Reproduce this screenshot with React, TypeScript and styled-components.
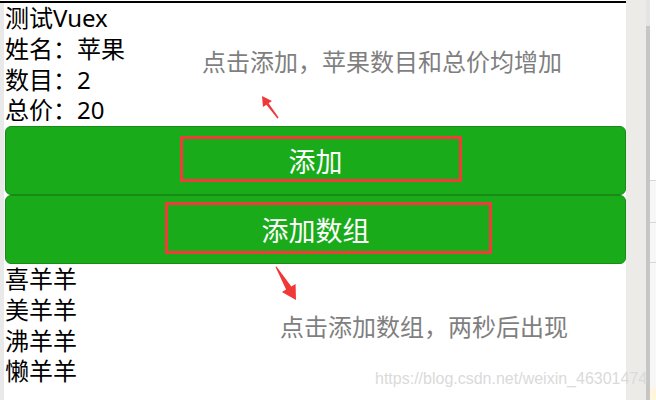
import React from 'react'
import styled, { createGlobalStyle } from 'styled-components'

const GlobalStyle = createGlobalStyle`
  html, body {
    margin: 0;
    padding: 0;
    background: #ffffff;
    overflow: hidden;
  }
`

const Frame = styled('div')`
  position: relative;
  display: flex;
  width: 656px;
  height: 400px;
  overflow: hidden;
  font-family: "Noto Sans", "Noto Sans CJK SC", sans-serif;
`

const Page = styled('div')`
  display: flex;
  flex-direction: column;
  width: 626px;
  flex-shrink: 0;
`

const TopRule = styled('div')`
  height: 3px;
  border-top: 1px solid #ffffff;
  border-bottom: 2px solid #000000;
  box-sizing: border-box;
  flex-shrink: 0;
`

const Content = styled('div')`
  flex: 1;
  border-left: 4px solid #e9e9e9;
  padding: 0 0 0 1px;
`

const Line = styled('div')`
  font-size: 24px;
  line-height: 30.75px;
  color: #000000;
  white-space: nowrap;
`

const Block = styled('div')`
  display: flex;
  flex-direction: column;
`

const GreenButton = styled('button')`
  display: flex;
  align-items: center;
  justify-content: center;
  width: 100%;
  height: 69px;
  box-sizing: border-box;
  border: 1px solid #168c16;
  border-radius: 6px;
  background: #1aab1a;
  color: #ffffff;
  font-family: "Noto Sans CJK SC", "Noto Sans", sans-serif;
  font-size: 27px;
  padding: 0;
  cursor: pointer;
`

const Side = styled('div')`
  display: flex;
  width: 30px;
  flex-shrink: 0;
`

const Track = styled('div')`
  width: 20px;
  background: #ecebe8;
`

const Thumb = styled('div')`
  width: 4px;
  background: linear-gradient(#e4e4e4 0, #e4e4e4 26px, #c6c6c6 26px);
`

const Edge = styled('div')`
  width: 6px;
  background:
    linear-gradient(#ffffff 0, #ffffff 180px, #d6d6d6 180px, #d6d6d6 181px, #f7f7f7 181px, #f7f7f7 222px, #d6d6d6 222px, #d6d6d6 223px, #f7f7f7 223px, #f7f7f7 262px, #d6d6d6 262px, #d6d6d6 263px, #f7f7f7 263px, #f7f7f7 388px, #fff6dc 388px);
`

const Overlay = styled('div')`
  position: absolute;
  inset: 0;
  pointer-events: none;
`

const Note = styled('div')<{ $left: number; $top: number }>`
  position: absolute;
  left: ${(p) => p.$left}px;
  top: ${(p) => p.$top}px;
  font-family: "Noto Sans CJK SC", sans-serif;
  font-size: 24px;
  line-height: 24px;
  color: #7f7f7f;
  white-space: nowrap;
`

const RedBox = styled('div')<{ $left: number; $top: number; $w: number; $h: number }>`
  position: absolute;
  left: ${(p) => p.$left}px;
  top: ${(p) => p.$top}px;
  width: ${(p) => p.$w}px;
  height: ${(p) => p.$h}px;
  box-sizing: border-box;
  border: 3px solid #f23a3a;
`

const Watermark = styled('div')`
  position: absolute;
  left: 375px;
  top: 371px;
  font-family: "Liberation Sans", Arial, sans-serif;
  font-size: 16px;
  line-height: 16px;
  color: #dadada;
  white-space: nowrap;
`

const ArrowLayer = styled('svg')`
  position: absolute;
  left: 0;
  top: 0;
`

const info = ['测试Vuex', '姓名：苹果', '数目：2', '总价：20']
const sheep = ['喜羊羊', '美羊羊', '沸羊羊', '懒羊羊']

const App = () => {
  return (
    <>
      <GlobalStyle />
      <Frame>
        <Page>
          <TopRule />
          <Content>
            <Block>
              {info.map((t) => (
                <Line key={t}>{t}</Line>
              ))}
            </Block>
            <GreenButton>添加</GreenButton>
            <GreenButton>添加数组</GreenButton>
            <Block>
              {sheep.map((t) => (
                <Line key={t}>{t}</Line>
              ))}
            </Block>
          </Content>
        </Page>
        <Side>
          <Track />
          <Thumb />
          <Edge />
        </Side>
        <Overlay>
          <Note $left={202} $top={49}>点击添加，苹果数目和总价均增加</Note>
          <Note $left={280} $top={314}>点击添加数组，两秒后出现</Note>
          <RedBox $left={180} $top={136} $w={282} $h={46} />
          <RedBox $left={165} $top={202} $w={327} $h={52} />
          <ArrowLayer width="656" height="400" viewBox="0 0 656 400">
            <polygon
              points="262,96 272,101 268.6,103.2 278.6,117.6 277.4,118.4 266.4,104.8 263,107"
              fill="#f03838"
            />
            <polygon
              points="275.5,267 276.5,266.6 291.3,286.4 295.6,283.9 296,300 281.9,292.1 286.1,289.6"
              fill="#f03838"
            />
          </ArrowLayer>
          <Watermark>https://blog.csdn.net/weixin_46301474</Watermark>
        </Overlay>
      </Frame>
    </>
  )
}

export default App
